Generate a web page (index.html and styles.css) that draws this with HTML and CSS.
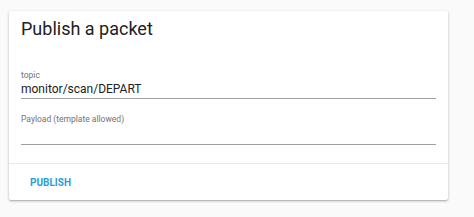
FILE: index.html
```html
<!DOCTYPE html>
<html lang="en">
<head>
  <meta charset="UTF-8">
  <link rel="stylesheet" href="styles.css">
  <title>Publish a packet</title>
</head>
<body>

<div class="card">
  <div class="card-header">Publish a packet</div>

  <div class="card-content">
    <div class="field">
      <label for="topic">topic</label>
      <input type="text" id="topic" value="monitor/scan/DEPART">
    </div>
    <div class="field">
      <label for="payload">Payload (template allowed)</label>
      <input type="text" id="payload">
    </div>
  </div>

  <div class="card-actions">
    <button>PUBLISH</button>
  </div>
</div>

</body>
</html>
```

FILE: styles.css
```css
body {
  margin: 0;
  padding: 11px 26px 17px 9px;
  background-color: #fafafa;
  font-family: 'Roboto', sans-serif;
  color: #212121;
}

.card {
  background-color: #fff;
  border-radius: 2px;
  box-shadow: 0 1px 3px rgba(0, 0, 0, 0.25), 0 1px 1px rgba(0, 0, 0, 0.12);
  height: 189px;
  box-sizing: border-box;
}

.card-header {
  font-size: 18px;
  line-height: 22px;
  padding: 7px 12px 0;
}

.card-content {
  padding: 29px 12px 0;
}

.field {
  display: flex;
  flex-direction: column;
}

.field + .field {
  margin-top: 14px;
}

label {
  font-size: 8.5px;
  line-height: 12px;
  color: #737373;
}

input {
  box-sizing: content-box;
  border: none;
  border-bottom: 1px solid #a0a0a0;
  font-family: 'Roboto', sans-serif;
  font-size: 12px;
  line-height: 14px;
  height: 14px;
  color: #212121;
  padding: 1px 0 2px;
  margin: 0;
  outline: none;
}

#payload {
  height: 16px;
}

.card-actions {
  margin-top: 18px;
  border-top: 1px solid #e8e8e8;
  padding: 7px 12px;
}

button {
  background: none;
  border: none;
  font-family: 'Roboto', sans-serif;
  font-weight: bold;
  font-size: 10px;
  line-height: 20px;
  color: #2a9ed4;
  padding: 0 9px;
  cursor: pointer;
}
```
